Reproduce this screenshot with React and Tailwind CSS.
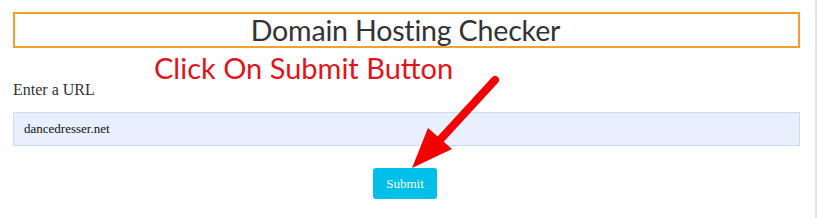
import React from 'react';

export default function App() {
  return (
    <div className="relative w-[817px] h-[218px] bg-[#fefefe] overflow-hidden border-r-2 border-[#e2e2e2]">
      <div className="pt-[12px] pl-[13px] pr-[15px]">
        {/* Title */}
        <div className="h-[36px] border-2 border-[#f0a12a] flex items-center justify-center">
          <h1 className="text-[28.6px] leading-none text-[#333] font-['Lato',sans-serif] tracking-[-0.2px] ml-[-2px]">
            Domain Hosting Checker
          </h1>
        </div>

        {/* Form */}
        <label className="block mt-[32px] text-[16px] leading-[20px] text-[#333] font-['Liberation_Serif',serif]">
          Enter a URL
        </label>
        <div className="mt-[12px] h-[34px] bg-[#e8f0fe] border border-[#c7def0] flex items-center px-[10px]">
          <span className="text-[13px] text-[#111] font-['Liberation_Serif',serif]">dancedresser.net</span>
        </div>
        <div className="flex justify-center mt-[22px]">
          <button className="w-[64px] h-[31px] rounded-[3px] bg-[#00bfe9] text-white text-[13px] font-['Liberation_Serif',serif] ml-[-3px]">
            Submit
          </button>
        </div>
      </div>

      {/* Annotation */}
      <div className="absolute left-[154px] top-[50px] text-[29px] leading-[36px] text-[#e0141b] font-['Lato',sans-serif]">
        Click On Submit Button
      </div>
      <svg className="absolute left-0 top-0" width="817" height="218" viewBox="0 0 817 218">
        <line x1="495" y1="80" x2="438" y2="142" stroke="#f40000" strokeWidth="8" strokeLinecap="round" />
        <polygon points="412,168 428,128 452,149" fill="#f40000" />
      </svg>
    </div>
  );
}
